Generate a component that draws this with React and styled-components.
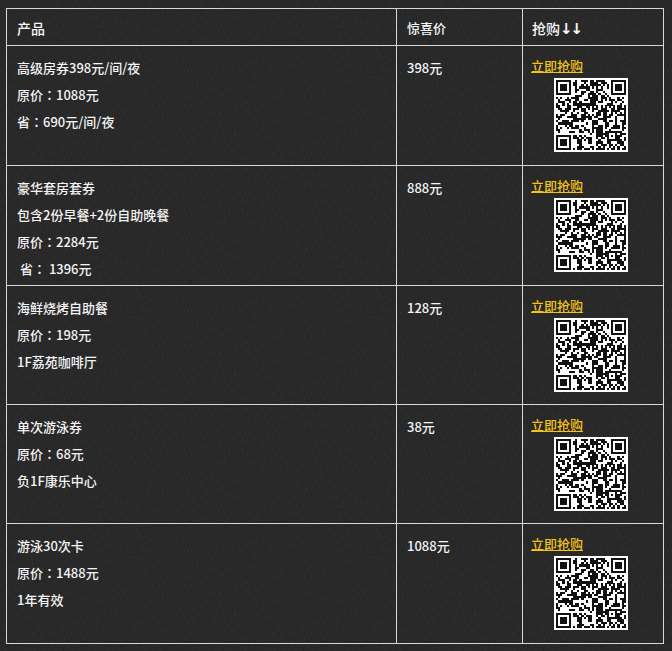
import React from 'react';
import styled, { createGlobalStyle } from 'styled-components';

const GlobalStyle = createGlobalStyle`
  html, body {
    margin: 0;
    padding: 0;
    background: #222222;
  }
  body {
    font-family: "Noto Sans CJK SC", "Noto Sans", sans-serif;
    color: #f4f4f4;
  }
`;

const Page = styled.div`
  min-height: 651px;
  padding: 8px 0 0 6px;
  box-sizing: border-box;
  background-color: #222222;
  background-image: url("data:image/svg+xml;utf8,<svg xmlns='http://www.w3.org/2000/svg' width='240' height='240'><filter id='n'><feTurbulence type='fractalNoise' baseFrequency='0.9 0.25' numOctaves='2' seed='4'/><feColorMatrix values='0 0 0 0 0.5  0 0 0 0 0.5  0 0 0 0 0.5  0 0 0 0.09 0'/></filter><rect width='240' height='240' filter='url(%23n)'/></svg>");
`;

const Table = styled.table`
  width: 657px;
  border-collapse: collapse;
  font-size: 13px;
  table-layout: fixed;
`;

const HeadCell = styled.th`
  border: 1px solid #d8d8d8;
  height: 37px;
  padding: 1px 10px 0 ${p => p.$pl || 10}px;
  text-align: left;
  font-weight: 500;
  font-size: ${p => p.$fs || 13}px;
  color: #f6f6f6;
  width: ${p => p.$w}px;
  box-sizing: border-box;
`;

const Cell = styled.td`
  border: 1px solid #d8d8d8;
  height: ${p => p.$h}px;
  padding: 8px 10px 0 ${p => p.$pl || 10}px;
  vertical-align: top;
  box-sizing: border-box;
`;

const Line = styled.div`
  line-height: 27px;
  white-space: pre;
  font-weight: 500;
  color: #f4f4f4;
`;

const Colon = styled.span`
  font-family: "Noto Sans CJK JP", "Noto Sans CJK SC", sans-serif;
`;

const BuyLink = styled.a`
  display: block;
  line-height: 24px;
  font-weight: 500;
  color: #f2c21a;
  text-decoration: underline;
  cursor: pointer;
`;

const QrBox = styled.div`
  display: flex;
  justify-content: center;
  padding-right: 2px;
`;

const Arrows = styled.span`
  font-family: "DejaVu Sans", sans-serif;
  font-weight: bold;
  font-size: 15px;
  letter-spacing: -2px;
`;

function makeQr(seed) {
  const n = 33;
  let s = seed;
  const rnd = () => {
    s = (s * 1103515245 + 12345) & 0x7fffffff;
    return s / 0x7fffffff;
  };
  const m = [];
  for (let y = 0; y < n; y++) {
    const row = [];
    for (let x = 0; x < n; x++) row.push(rnd() < 0.52 ? 1 : 0);
    m.push(row);
  }
  const finder = (ox, oy) => {
    for (let y = -1; y < 8; y++) {
      for (let x = -1; x < 8; x++) {
        const yy = oy + y, xx = ox + x;
        if (yy < 0 || xx < 0 || yy >= n || xx >= n) continue;
        let v = 0;
        if (x >= 0 && x <= 6 && y >= 0 && y <= 6) {
          v = x === 0 || x === 6 || y === 0 || y === 6 || (x >= 2 && x <= 4 && y >= 2 && y <= 4) ? 1 : 0;
        }
        m[yy][xx] = v;
      }
    }
  };
  finder(0, 0);
  finder(n - 7, 0);
  finder(0, n - 7);
  // small alignment square
  for (let y = -2; y <= 2; y++) {
    for (let x = -2; x <= 2; x++) {
      const ax = n - 7 + x, ay = n - 7 + y;
      m[ay][ax] = Math.max(Math.abs(x), Math.abs(y)) === 1 ? 0 : 1;
    }
  }
  return m;
}

const qrData = makeQr(20240611);

function QrCode() {
  const n = qrData.length;
  const rects = [];
  qrData.forEach((row, y) =>
    row.forEach((v, x) => {
      if (v) rects.push(<rect key={`${x}-${y}`} x={x + 1} y={y + 1} width="1.02" height="1.02" />);
    })
  );
  return (
    <svg width="74" height="74" viewBox={`0 0 ${n + 2} ${n + 2}`} shapeRendering="crispEdges">
      <rect width={n + 2} height={n + 2} fill="#fff" />
      <g fill="#111">{rects}</g>
    </svg>
  );
}

// render a line, giving full-width colons their centred form
function Text({ children }) {
  const parts = children.split('：');
  return (
    <Line>
      {parts.map((part, i) => (
        <React.Fragment key={i}>
          {i > 0 && <Colon>：</Colon>}
          {part}
        </React.Fragment>
      ))}
    </Line>
  );
}

const products = [
  { lines: ['高级房券398元/间/夜', '原价：1088元', '省：690元/间/夜'], price: '398元', h: 120 },
  { lines: ['豪华套房套券', '包含2份早餐+2份自助晚餐', '原价：2284元', ' 省： 1396元'], price: '888元', h: 120 },
  { lines: ['海鲜烧烤自助餐', '原价：198元', '1F荔苑咖啡厅'], price: '128元', h: 119 },
  { lines: ['单次游泳券', '原价：68元', '负1F康乐中心'], price: '38元', h: 119 },
  { lines: ['游泳30次卡', '原价：1488元', '1年有效'], price: '1088元', h: 120 },
];

export default function App() {
  return (
    <Page>
      <GlobalStyle />
      <Table>
        <thead>
          <tr>
            <HeadCell $w={390} $fs={14}>产品</HeadCell>
            <HeadCell $w={126}>惊喜价</HeadCell>
            <HeadCell $w={141} $fs={14} $pl={9}>
              抢购<Arrows>↓↓</Arrows>
            </HeadCell>
          </tr>
        </thead>
        <tbody>
          {products.map((p, i) => (
            <tr key={i}>
              <Cell $h={p.h}>
                {p.lines.map((l, j) => (
                  <Text key={j}>{l}</Text>
                ))}
              </Cell>
              <Cell $h={p.h}>
                <Text>{p.price}</Text>
              </Cell>
              <Cell $h={p.h} $pl={8}>
                <BuyLink>立即抢购</BuyLink>
                <QrBox>
                  <QrCode />
                </QrBox>
              </Cell>
            </tr>
          ))}
        </tbody>
      </Table>
    </Page>
  );
}
